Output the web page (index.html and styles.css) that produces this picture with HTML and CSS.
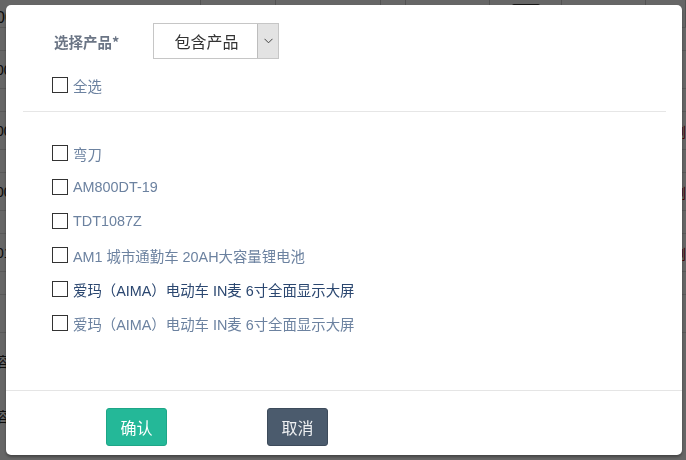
FILE: index.html
```html
<!DOCTYPE html>
<html lang="zh-CN">
<head>
<meta charset="utf-8">
<title>选择产品</title>
<link rel="stylesheet" href="styles.css">
</head>
<body>
<div class="page">
  <div class="bg-row bg-head">
    <span class="c c1">00三纸扣类</span><span class="c c2">数量</span><span class="c c3">100</span><span class="c c4"></span><span class="c c5">5</span><span class="c c6"><i class="bg-icon"></i></span><span class="c c7">5</span><span class="c c8 red">删</span>
  </div>
  <div class="bg-row"></div>
  <div class="bg-row tall"><span class="c c1">00</span></div>
  <div class="bg-row"></div>
  <div class="bg-row tall"><span class="c c1">00</span><span class="c cr red">删</span></div>
  <div class="bg-row"></div>
  <div class="bg-row tall"><span class="c c1">00</span><span class="c cr red">删</span></div>
  <div class="bg-row"></div>
  <div class="bg-row tall"><span class="c c1">01</span><span class="c cr red">删</span></div>
  <div class="bg-row"></div>
  <div class="bg-row tall"></div>
  <div class="bg-row xtall"><span class="c c1">容</span></div>
  <div class="bg-row xtall"><span class="c c1">容</span></div>
</div>

<div class="backdrop"></div>

<div class="modal">
  <div class="modal-body">
    <div class="form-row">
      <label class="form-label">选择产品*</label>
      <div class="select">
        <span class="select-value">包含产品</span>
        <span class="select-btn">
          <svg width="9" height="6" viewBox="0 0 9 6"><path d="M0.5 0.8 L4.5 4.8 L8.5 0.8" fill="none" stroke="#444" stroke-width="1"/></svg>
        </span>
      </div>
    </div>
    <label class="check all"><span class="box"></span><span class="txt">全选</span></label>
    <div class="divider"></div>
    <ul class="list">
      <li class="check"><span class="box"></span><span class="txt">弯刀</span></li>
      <li class="check"><span class="box"></span><span class="txt">AM800DT-19</span></li>
      <li class="check"><span class="box"></span><span class="txt">TDT1087Z</span></li>
      <li class="check"><span class="box"></span><span class="txt">AM1 城市通勤车 20AH大容量锂电池</span></li>
      <li class="check hover"><span class="box"></span><span class="txt">爱玛（AIMA）电动车 IN麦 6寸全面显示大屏</span></li>
      <li class="check"><span class="box"></span><span class="txt">爱玛（AIMA）电动车 IN麦 6寸全面显示大屏</span></li>
    </ul>
  </div>
  <div class="modal-footer">
    <button class="btn btn-ok">确认</button>
    <button class="btn btn-cancel">取消</button>
  </div>
</div>
</body>
</html>
```

FILE: styles.css
```css
html, body {
  margin: 0;
  padding: 0;
}
body {
  width: 686px;
  height: 460px;
  overflow: hidden;
  background: #fff;
  font-family: "Liberation Sans", "Noto Sans CJK SC", sans-serif;
  color: #333;
}

/* background page (under the overlay) */
.page {
  width: 686px;
}
.bg-row {
  height: 23px;
  border-bottom: 1px solid #ddd;
  display: flex;
  align-items: center;
  font-size: 14px;
  color: #222;
  box-sizing: border-box;
}
.bg-row.tall {
  height: 38px;
}
.bg-row.xtall {
  height: 55px;
  border-bottom: 0;
}
.bg-head {
  height: 28px;
}
.c {
  display: flex;
  align-items: center;
  height: 100%;
  box-sizing: border-box;
  white-space: nowrap;
}
.bg-head .c {
  border-right: 1px solid #ccc;
  align-items: flex-start;
  padding-top: 4px;
  font-size: 16px;
}
.c1 { width: 206px; margin-left: -4px; }
.c2 { width: 76px; padding-left: 22px; }
.c3 { width: 105px; padding-left: 16px; }
.c4 { width: 25px; }
.c5 { width: 85px; padding-left: 15px; }
.c6 { width: 72px; padding-left: 22px; }
.c7 { width: 85px; padding-left: 14px; }
.c8 { width: 40px; }
.cr { margin-left: auto; width: 6px; overflow: hidden; justify-content: flex-end; }
.red { color: #a00; }
.bg-icon {
  display: block;
  width: 28px;
  height: 12px;
  background: #333;
  border-radius: 2px;
}

.backdrop {
  position: fixed;
  inset: 0;
  background: rgba(0, 0, 0, 0.6);
}

/* modal */
.modal {
  position: fixed;
  left: 6px;
  top: 5px;
  width: 676px;
  height: 450px;
  background: #fff;
  border-radius: 5px;
  box-shadow: 0 2px 3px rgba(0, 0, 0, 0.35);
  display: flex;
  flex-direction: column;
}
.modal-body {
  flex: 1;
  padding: 18px 16px 0 17px;
}
.form-row {
  display: flex;
  align-items: center;
  height: 36px;
}
.form-label {
  width: 99px;
  padding-left: 31px;
  font-size: 14.5px;
  font-weight: bold;
  color: #6b7585;
  font-family: "Noto Sans CJK SC", "Liberation Sans", sans-serif;
}
.select {
  display: flex;
  width: 126px;
  height: 36px;
  box-sizing: border-box;
  border: 1px solid #c6c6c6;
  background: #fff;
}
.select-value {
  flex: 1;
  display: flex;
  align-items: center;
  justify-content: center;
  font-size: 16px;
  color: #333;
  padding-left: 2px;
  font-family: "Noto Sans CJK SC", sans-serif;
}
.select-btn {
  width: 20px;
  display: flex;
  align-items: center;
  justify-content: center;
  background: #e3e3e3;
  border-left: 1px solid #bdbdbd;
}

.check {
  display: flex;
  align-items: center;
  font-size: 14.4px;
  color: #6c82a0;
  height: 34px;
}
.check.all {
  margin-top: 9px;
  padding-left: 29px;
  height: 34px;
  margin-bottom: 9px;
}
.box {
  width: 16px;
  height: 16px;
  box-sizing: border-box;
  border: 1.5px solid #333;
  background: #fff;
  margin-right: 5px;
  flex: none;
}
.txt {
  font-family: "Liberation Sans", "Noto Sans CJK SC", sans-serif;
  white-space: nowrap;
}
.check.hover {
  color: #2b4770;
}
.divider {
  height: 1px;
  background: #e6e6e6;
}
.list {
  list-style: none;
  margin: 24px 0 0 0;
  padding: 0 0 0 29px;
}

.modal-footer {
  border-top: 1px solid #e5e5e5;
  height: 65px;
  display: flex;
  align-items: flex-start;
  padding: 17px 0 0 100px;
  box-sizing: border-box;
  gap: 100px;
}
.btn {
  width: 61px;
  height: 38px;
  border-radius: 3px;
  font-size: 16px;
  font-family: "Noto Sans CJK SC", sans-serif;
  color: #fff;
  cursor: pointer;
  padding: 0;
}
.btn-ok {
  background: #24b898;
  border: 1px solid #1ea687;
}
.btn-cancel {
  background: #4b5b6d;
  border: 1px solid #3d4b5b;
  color: #eef0f2;
}
```
